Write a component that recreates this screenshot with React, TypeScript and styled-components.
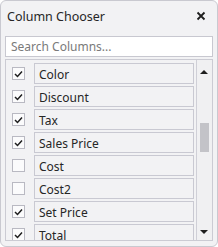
import React from 'react';
import styled, { createGlobalStyle } from 'styled-components';

const GlobalStyle = createGlobalStyle`
  html, body {
    margin: 0;
    padding: 0;
    background: #ffffff;
  }
  * {
    box-sizing: border-box;
  }
`;

const Panel = styled.div({
  width: "218px",
  height: "247px",
  display: "flex",
  flexDirection: "column",
  padding: "0 4px",
  border: "1px solid #c9c9d0",
  borderRadius: "6px",
  backgroundColor: "#f2f2f4",
  backgroundImage: "radial-gradient(#e4e4ea 0.6px, transparent 0.7px)",
  backgroundSize: "4px 4px",
  fontFamily: "'Noto Sans', 'Open Sans', sans-serif",
  color: "#222",
  overflow: "hidden",
})

const Header = styled.div({
  height: "29px",
  display: "flex",
  alignItems: "center",
  justifyContent: "space-between",
  paddingLeft: "2px",
  paddingRight: "7px",
  flexShrink: 0,
})

const Title = styled.span({
  fontSize: "12.5px",
  color: "#262626",
  marginTop: "1px",
})

const CloseButton = styled.button({
  border: "none",
  background: "transparent",
  padding: 0,
  display: "flex",
  width: "10px",
  height: "10px",
  marginTop: "1px",
})

const SearchBox = styled.input({
  marginTop: "6px",
  height: "21px",
  width: "100%",
  flexShrink: 0,
  border: "1px solid #c8c8d0",
  background: "#ffffff",
  padding: "0 5px",
  fontFamily: "'Noto Sans', 'Open Sans', sans-serif",
  fontSize: "12px",
  color: "#222",
  outline: "none",
  "&::placeholder": {
    color: "#7a7a7a",
  },
})

const List = styled.div({
  marginTop: "2px",
  height: "182px",
  flexShrink: 0,
  display: "flex",
  border: "1px solid #cbcbd3",
  overflow: "hidden",
})

const Rows = styled.div({
  flex: 1,
  display: "flex",
  flexDirection: "column",
  gap: "2px",
  padding: "3px 2px 0 6px",
})

const Row = styled.div({
  display: "flex",
  alignItems: "center",
  gap: "9px",
  flexShrink: 0,
})

const Check = styled.span({
  width: "13px",
  height: "13px",
  flexShrink: 0,
  border: "1px solid #b9b9c2",
  background: "#fbfbfc",
  display: "flex",
  alignItems: "center",
  justifyContent: "center",
})

const Label = styled.div({
  flex: 1,
  height: "21px",
  border: "1px solid #c9c9d2",
  display: "flex",
  alignItems: "center",
  paddingLeft: "4px",
  paddingTop: "1px",
  fontSize: "12px",
  color: "#262626",
})

const ScrollBar = styled.div({
  width: "16px",
  borderLeft: "1px solid #cfcfd7",
  background: "#f0f0f2",
  position: "relative",
})

const Arrow = styled.div<{ $down?: boolean }>(props => ({
  position: "absolute",
  left: "3px",
  width: 0,
  height: 0,
  borderLeft: "4px solid transparent",
  borderRight: "4px solid transparent",
  ...(props.$down
    ? { bottom: "6px", borderTop: "4px solid #1e1e1e" }
    : { top: "10px", borderBottom: "4px solid #1e1e1e" }),
}))

const Thumb = styled.div({
  position: "absolute",
  left: "3px",
  top: "63px",
  width: "9px",
  height: "29px",
  background: "#c3c3c8",
})

const columns = [
  { name: "Color", checked: true },
  { name: "Discount", checked: true },
  { name: "Tax", checked: true },
  { name: "Sales Price", checked: true },
  { name: "Cost", checked: false },
  { name: "Cost2", checked: false },
  { name: "Set Price", checked: true },
  { name: "Total", checked: true },
]

function CheckMark() {
  return (
    <svg width="9" height="8" viewBox="0 0 9 8">
      <path d="M1 4 L3.5 6.5 L8 1.5" fill="none" stroke="#1e1e1e" strokeWidth="1.5" />
    </svg>
  )
}

function App() {
  return (
    <>
      <GlobalStyle />
      <Panel>
        <Header>
          <Title>Column Chooser</Title>
          <CloseButton>
            <svg width="10" height="10" viewBox="0 0 10 10">
              <path d="M1.5 1.5 L8.5 8.5 M8.5 1.5 L1.5 8.5" stroke="#1e1e1e" strokeWidth="1.8" />
            </svg>
          </CloseButton>
        </Header>
        <SearchBox placeholder="Search Columns..." />
        <List>
          <Rows>
            {columns.map(col => (
              <Row key={col.name}>
                <Check>{col.checked && <CheckMark />}</Check>
                <Label>{col.name}</Label>
              </Row>
            ))}
          </Rows>
          <ScrollBar>
            <Arrow />
            <Thumb />
            <Arrow $down />
          </ScrollBar>
        </List>
      </Panel>
    </>
  );
}

export default App;
